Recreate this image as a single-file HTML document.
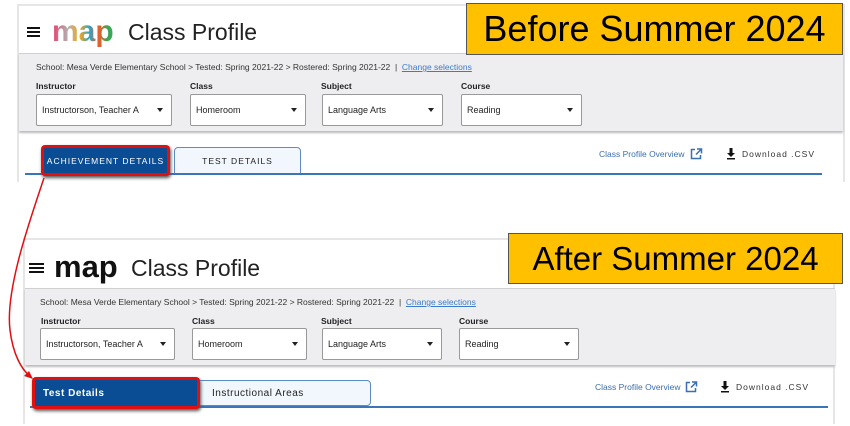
<!DOCTYPE html>
<html><head><meta charset="utf-8"><style>
*{box-sizing:border-box;margin:0;padding:0}
body{width:850px;height:426px;background:#fff;position:relative;overflow:hidden;font-family:"Liberation Sans",sans-serif;color:#222}
.a{position:absolute}
.frame{position:absolute;border-top:2px solid #e6e6e6;border-left:2px solid #e6e6e6;border-right:2px solid #e6e6e6}
.gray{position:absolute;background:#eeeef0;border-top:1px solid #d0d0d0;box-shadow:0 2px 2px #bbb}
.bc{position:absolute;font-size:8.5px;color:#333;white-space:nowrap}
.bc u{color:#3a7cc9}
.lbl{position:absolute;font-size:8.5px;font-weight:bold;color:#222}
.dd{position:absolute;background:#fff;border:1px solid #999;border-radius:2px;font-size:9px;padding-left:5px;display:flex;align-items:center}
.dd:after{content:"";position:absolute;right:8px;top:50%;margin-top:-2px;border-left:3px solid transparent;border-right:3px solid transparent;border-top:4px solid #222}
.ttl{position:absolute;font-size:23px;color:#222;white-space:nowrap}
.ham{position:absolute;width:13px;height:10px;border-top:2.5px solid #111;border-bottom:2.5px solid #111}
.ham:after{content:"";position:absolute;left:0;right:0;top:1.5px;border-top:2.5px solid #111}
.yel{position:absolute;background:#ffc000;border:1px solid #555;font-family:"Liberation Sans",sans-serif;color:#000;display:flex;align-items:center;justify-content:center;white-space:nowrap}
.lnk{position:absolute;font-size:8.5px;color:#3a6fb0;white-space:nowrap}
.dl{position:absolute;font-size:8.5px;color:#333;letter-spacing:1px;white-space:nowrap}
.line{position:absolute;height:2px;background:#3a75b8}
.logo{position:absolute;font-size:30px;font-weight:bold;line-height:1;white-space:nowrap}
</style></head><body>

<!-- TOP -->
<div class="frame" style="left:17px;top:4px;width:828px;height:178px"></div>
<div class="ham" style="left:27px;top:27px"></div>
<div class="logo" style="left:52px;top:17px;background:linear-gradient(90deg,#e83c6a,#b0b0b0 25%,#f5a623 45%,#27a7c9 60%,#f05a28 75%,#3aa757 90%);-webkit-background-clip:text;color:transparent">map</div>
<div class="ttl" style="left:128px;top:19px">Class Profile</div>
<div class="gray" style="left:19px;top:53px;width:824px;height:78px"></div>
<div class="bc" style="left:36px;top:62px">School: Mesa Verde Elementary School &gt; Tested: Spring 2021-22 &gt; Rostered: Spring 2021-22 &nbsp;| &nbsp;<u>Change selections</u></div>
<div class="lbl" style="left:36px;top:81px">Instructor</div>
<div class="lbl" style="left:190px;top:81px">Class</div>
<div class="lbl" style="left:321px;top:81px">Subject</div>
<div class="lbl" style="left:461px;top:81px">Course</div>
<div class="dd" style="left:36px;top:94px;width:136px;height:32px">Instructorson, Teacher A</div>
<div class="dd" style="left:190px;top:94px;width:116px;height:32px">Homeroom</div>
<div class="dd" style="left:322px;top:94px;width:121px;height:32px">Language Arts</div>
<div class="dd" style="left:461px;top:94px;width:121px;height:32px">Reading</div>
<div class="yel" style="left:466px;top:3px;width:377px;height:52px;font-size:36px">Before Summer 2024</div>
<div class="a" style="left:174px;top:147px;width:127px;height:27px;background:#f1f7fd;border:1px solid #5b8cc9;border-radius:4px 4px 0 0;font-size:8.5px;letter-spacing:1px;display:flex;align-items:center;justify-content:center">TEST DETAILS</div>
<div class="line" style="left:25px;top:173px;width:797px"></div>
<div class="a" style="left:41px;top:145px;width:129px;height:31px;background:#0b4d94;border:3px solid #e01010;border-radius:4px;box-shadow:1px 2px 3px #555;color:#fff;font-size:8.5px;letter-spacing:1px;display:flex;align-items:center;justify-content:center">ACHIEVEMENT DETAILS</div>
<div class="lnk" style="left:599px;top:149px">Class Profile Overview</div>
<svg class="a" style="left:690px;top:148px" width="13" height="12" viewBox="0 0 13 12"><path d="M5 1.5H1.5v9h9V7" fill="none" stroke="#3a6fb0" stroke-width="1.5"/><path d="M7 1h4.5v4.5M11.5 1L6 6.5" fill="none" stroke="#3a6fb0" stroke-width="1.5"/></svg>
<svg class="a" style="left:726px;top:148px" width="10" height="12" viewBox="0 0 10 12"><path d="M3.5 0h3v5h2.5L5 9 1 5h2.5z" fill="#111"/><rect x="1" y="10" width="8" height="1.5" fill="#111"/></svg>
<div class="dl" style="left:742px;top:149px">Download .CSV</div>

<!-- BOTTOM -->
<div class="frame" style="left:23px;top:238px;width:812px;height:186px"></div>
<div class="ham" style="left:29px;top:263px;width:15px"></div>
<div class="logo" style="left:54px;top:251px;font-size:31px;color:#111">map</div>
<div class="ttl" style="left:131px;top:255px">Class Profile</div>
<div class="gray" style="left:25px;top:288px;width:810px;height:77px"></div>
<div class="bc" style="left:40px;top:297px">School: Mesa Verde Elementary School &gt; Tested: Spring 2021-22 &gt; Rostered: Spring 2021-22 &nbsp;| &nbsp;<u>Change selections</u></div>
<div class="lbl" style="left:41px;top:316px">Instructor</div>
<div class="lbl" style="left:192px;top:316px">Class</div>
<div class="lbl" style="left:321px;top:316px">Subject</div>
<div class="lbl" style="left:459px;top:316px">Course</div>
<div class="dd" style="left:40px;top:328px;width:135px;height:32px">Instructorson, Teacher A</div>
<div class="dd" style="left:192px;top:328px;width:115px;height:32px">Homeroom</div>
<div class="dd" style="left:322px;top:328px;width:120px;height:32px">Language Arts</div>
<div class="dd" style="left:459px;top:328px;width:120px;height:32px">Reading</div>
<div class="yel" style="left:508px;top:233px;width:335px;height:51px;font-size:33px">After Summer 2024</div>
<div class="a" style="left:198px;top:380px;width:173px;height:26px;background:#f1f7fd;border:1px solid #5b8cc9;border-radius:0 4px 4px 0;font-size:10px;letter-spacing:.5px;padding-left:13px;display:flex;align-items:center">Instructional Areas</div>
<div class="line" style="left:30px;top:406px;width:798px"></div>
<div class="a" style="left:32px;top:377px;width:168px;height:32px;background:#0b4d94;border:3px solid #e01010;border-radius:4px;box-shadow:1px 2px 3px #555;color:#fff;font-size:10px;font-weight:bold;letter-spacing:.5px;padding-left:8px;display:flex;align-items:center">Test Details</div>
<div class="lnk" style="left:595px;top:382px">Class Profile Overview</div>
<svg class="a" style="left:685px;top:381px" width="13" height="12" viewBox="0 0 13 12"><path d="M5 1.5H1.5v9h9V7" fill="none" stroke="#3a6fb0" stroke-width="1.5"/><path d="M7 1h4.5v4.5M11.5 1L6 6.5" fill="none" stroke="#3a6fb0" stroke-width="1.5"/></svg>
<svg class="a" style="left:720px;top:381px" width="10" height="12" viewBox="0 0 10 12"><path d="M3.5 0h3v5h2.5L5 9 1 5h2.5z" fill="#111"/><rect x="1" y="10" width="8" height="1.5" fill="#111"/></svg>
<div class="dl" style="left:736px;top:382px">Download .CSV</div>

<!-- Arrow -->
<svg class="a" style="left:0;top:0" width="850" height="426">
<path d="M44 178 C30 220 5 290 10 330 C13 355 22 370 30 376" fill="none" stroke="#e01010" stroke-width="1.5"/>
<path d="M33 379 L24 376 L29 371 Z" fill="#e01010"/>
</svg>
</body></html>
